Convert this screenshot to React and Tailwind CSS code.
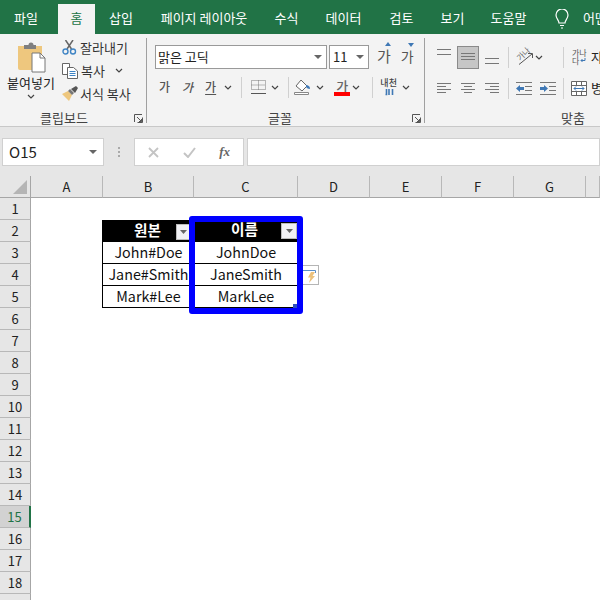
import React from "react";

const tabs = [
  { label: "파일", w: "w-[52px]" },
  { label: "홈", w: "w-[37px]", active: true },
  { label: "삽입", w: "w-[52px]" },
  { label: "페이지 레이아웃", w: "w-[114px]" },
  { label: "수식", w: "w-[51px]" },
  { label: "데이터", w: "w-[63px]" },
  { label: "검토", w: "w-[53px]" },
  { label: "보기", w: "w-[49px]" },
  { label: "도움말", w: "w-[63px]" },
];

const cols = ["A", "B", "C", "D", "E", "F", "G", ""];
const rows = Array.from({ length: 19 }, (_, i) => i + 1);

const Chevron = ({ className = "" }) => (
  <svg width="8" height="5" viewBox="0 0 8 5" className={"shrink-0 " + className}>
    <path d="M1 1l3 3 3-3" fill="none" stroke="#444" strokeWidth="1.2" />
  </svg>
);

const Caret = () => (
  <svg width="8" height="4" viewBox="0 0 8 4" className="shrink-0">
    <path d="M0 0h8L4 4z" fill="#666" />
  </svg>
);

const Launcher = () => (
  <svg width="9" height="9" viewBox="0 0 9 9" className="shrink-0 mb-[3px]">
    <path d="M.5 8V.5H8M8.500 3.500v5h-5M3 3l4.500 4.500M7.500 5v2.500H5" fill="none" stroke="#555" strokeWidth="1" />
  </svg>
);

const Divider = ({ h = "h-[20px]" }) => <div className={"w-px bg-[#d0d0d0] shrink-0 " + h} />;
const GroupLine = () => <div className="w-px bg-[#a0a0a0] shrink-0 mt-[4px] mb-[3px]" />;

const PasteIcon = () => (
  <svg width="29" height="32" viewBox="0 0 29 32">
    <path d="M1 5h24v24H3a2 2 0 0 1-2-2z" fill="#eec77e" />
    <path d="M7 4h4.500a2.500 2.500 0 0 1 5 0H19v4H7z" fill="#7f7f7f" />
    <path d="M15 12h8l5 5v14H15z" fill="#fff" stroke="#777" />
    <path d="M23 12v5h5" fill="none" stroke="#777" />
  </svg>
);

const CutIcon = () => (
  <svg width="15" height="15" viewBox="0 0 15 15">
    <path d="M3.500 0l6 9M11 0l-6 9" stroke="#666" strokeWidth="1.500" fill="none" />
    <circle cx="3.500" cy="11.500" r="2.500" fill="none" stroke="#3f84c4" strokeWidth="1.400" />
    <circle cx="11" cy="11.500" r="2.500" fill="none" stroke="#3f84c4" strokeWidth="1.400" />
  </svg>
);

const CopyIcon = () => (
  <svg width="16" height="16" viewBox="0 0 16 16">
    <path d="M.5.500h7v11h-7z" fill="#fff" stroke="#666" />
    <path d="M5.500 4.500h6l4 3.500v7.500h-10z" fill="#fff" stroke="#666" />
    <path d="M7.500 8.500h6M7.500 10.500h6M7.500 12.500h6" stroke="#3f84c4" />
  </svg>
);

const PainterIcon = () => (
  <svg width="16" height="15" viewBox="0 0 16 15">
    <path d="M0 8l6-3 4 4-3 6z" fill="#eec77e" />
    <path d="M6 5l2-2 4 4-2 2z" fill="#777" />
    <path d="M9 3l5-3 2 2-3 5z" fill="#555" />
  </svg>
);

const AlignLines = ({ lines }) => (
  <svg width="15" height="13" viewBox="0 0 15 13" className="shrink-0">
    {lines.map(([x1, x2, y]) => (
      <path key={y} d={`M${x1} ${y}.5H${x2}`} stroke="#777" />
    ))}
  </svg>
);

const Clipboard = () => (
  <section className="w-[146px] shrink-0 flex flex-col">
    <div className="flex h-[76px]">
      <div className="w-[62px] flex flex-col items-center pt-[7px]">
        <PasteIcon />
        <span className="text-[13px] leading-[20px]">붙여넣기</span>
        <Chevron className="mt-[1px]" />
      </div>
      <div className="flex flex-col pt-[2px] text-[13px] leading-[23px] text-[#333]">
        <div className="flex items-center h-[23px]">
          <CutIcon />
          <span className="ml-[3px]">잘라내기</span>
        </div>
        <div className="flex items-center h-[23px]">
          <CopyIcon />
          <span className="ml-[3px]">복사</span>
          <Chevron className="ml-[10px]" />
        </div>
        <div className="flex items-center h-[23px]">
          <PainterIcon />
          <span className="ml-[2px]">서식 복사</span>
        </div>
      </div>
    </div>
    <div className="flex-1 flex items-end pl-[40px] pr-[3px] justify-between text-[13px] text-[#444]">
      <span className="leading-[16px]">클립보드</span>
      <Launcher />
    </div>
  </section>
);

const FontSection = () => (
  <section className="w-[277px] shrink-0 flex flex-col pl-[8px] pr-[3px]">
    <div className="flex items-center h-[23px] mt-[11px]">
      <div className="w-[172px] h-[24px] bg-white border border-[#999] flex items-center justify-between pl-[2px] pr-[4px] text-[13px] text-[#222]">
        <span>맑은 고딕</span>
        <Caret />
      </div>
      <div className="w-[40px] h-[24px] ml-[2px] bg-white border border-[#999] flex items-center justify-between pl-[3px] pr-[4px] text-[13px] text-[#222]">
        <span>11</span>
        <Caret />
      </div>
      <span className="ml-[8px] text-[15px] text-[#555] relative">
        가
        <span className="absolute -top-[3px] right-0 w-0 h-0 border-x-[3px] border-b-[4px] border-x-transparent border-b-[#3f78b5]" />
      </span>
      <span className="ml-[10px] text-[14px] text-[#555] relative">
        가
        <span className="absolute -top-[3px] right-0 w-0 h-0 border-x-[3px] border-t-[4px] border-x-transparent border-t-[#3f78b5]" />
      </span>
    </div>
    <div className="flex items-center h-[24px] mt-[7px] text-[#555]">
      <span className="ml-[4px] text-[12px] font-medium">가</span>
      <span className="ml-[12px] text-[12px] italic font-medium">가</span>
      <span className="ml-[12px] text-[12px] font-medium underline underline-offset-2">가</span>
      <Chevron className="ml-[8px]" />
      <Divider h="h-[21px] ml-[9px]" />
      <svg width="16" height="15" viewBox="0 0 16 15" className="ml-[9px]">
        <path d="M.5.500h14v9h-14zM7.500.500v9M.5 5h14" fill="none" stroke="#777" strokeDasharray="1 1" />
        <path d="M0 13.500h15" stroke="#555" />
      </svg>
      <Chevron className="ml-[4px]" />
      <Divider h="h-[21px] ml-[9px]" />
      <svg width="17" height="16" viewBox="0 0 17 16" className="ml-[5px]">
        <path d="M7 1l6 6-5 5-6-5z" fill="#fff" stroke="#666" />
        <path d="M12 6c2 0 4 1 4 4-2 0-3-1-4-2z" fill="#3f78b5" />
        <path d="M.5 13.500h14v2H.5z" fill="#fff" stroke="#888" />
      </svg>
      <Chevron className="ml-[5px]" />
      <div className="ml-[10px] w-[16px] flex flex-col items-center">
        <span className="text-[13px] leading-[13px] font-medium text-[#666]">가</span>
        <div className="w-[16px] h-[4px] bg-[#ff0000]" />
      </div>
      <Chevron className="ml-[2px]" />
      <Divider h="h-[21px] ml-[12px]" />
      <div className="ml-[8px] w-[15px] flex flex-col items-center">
        <span className="text-[9px] leading-[10px] font-medium text-[#444] whitespace-nowrap">내천</span>
        <svg width="10" height="8" viewBox="0 0 10 8">
          <path d="M1.500 6.500h1V1M5 1v6M8.500 1v6" fill="none" stroke="#3f78b5" strokeWidth="1.600" />
        </svg>
      </div>
      <Chevron className="ml-[6px]" />
    </div>
    <div className="flex-1 flex items-end justify-between text-[13px] text-[#444]">
      <span className="ml-[113px] leading-[16px]">글꼴</span>
      <Launcher />
    </div>
  </section>
);

const Alignment = () => (
  <section className="flex-1 min-w-0 flex flex-col pl-[12px] overflow-hidden">
    <div className="flex items-center h-[24px] mt-[11px]">
      <div className="self-start mt-[3px]">
        <AlignLines lines={[[0, 14, 1], [0, 14, 6]]} />
      </div>
      <div className="w-[22px] h-[23px] ml-[5px] bg-[#c6c6c6] border border-[#8a8a8a] flex items-center justify-center shrink-0">
        <AlignLines lines={[[0, 14, 2], [0, 14, 5], [0, 14, 8]]} />
      </div>
      <div className="ml-[6px] mt-[8px]">
        <AlignLines lines={[[0, 14, 3], [0, 14, 8]]} />
      </div>
      <Divider h="h-[21px] ml-[8px]" />
      <div className="relative w-[17px] h-[17px] ml-[7px] shrink-0">
        <span className="absolute left-0 top-0 text-[8px] leading-[10px] text-[#666] -rotate-45 whitespace-nowrap">가나</span>
        <svg width="17" height="17" viewBox="0 0 17 17" className="absolute left-0 top-0">
          <path d="M3 15.500L16 5M12 4.500h4.500V9" stroke="#555" fill="none" />
        </svg>
      </div>
      <Chevron className="ml-[2px]" />
      <Divider h="h-[21px] ml-[20px]" />
      <div className="relative ml-[8px] w-[15px] h-[17px] text-[8px] leading-[8px] text-[#555] shrink-0">
        <span className="block whitespace-nowrap">가나</span>
        <span className="block">다</span>
        <svg width="6" height="5" viewBox="0 0 6 5" className="absolute right-[1px] bottom-[3px]">
          <path d="M5 0v2.500H1M2.500 1L1 2.500 2.500 4" fill="none" stroke="#3f78b5" />
        </svg>
      </div>
      <span className="ml-[4px] text-[13px] whitespace-nowrap">자동</span>
    </div>
    <div className="flex items-center h-[24px] mt-[7px]">
      <AlignLines lines={[[0, 14, 1], [0, 9, 4], [0, 14, 7], [0, 9, 10]]} />
      <div className="ml-[9px]">
        <AlignLines lines={[[0, 14, 1], [3, 11, 4], [0, 14, 7], [3, 11, 10]]} />
      </div>
      <div className="ml-[9px]">
        <AlignLines lines={[[0, 14, 1], [5, 14, 4], [0, 14, 7], [5, 14, 10]]} />
      </div>
      <Divider h="h-[21px] ml-[8px]" />
      <svg width="16" height="13" viewBox="0 0 16 13" className="ml-[7px] shrink-0">
        <path d="M0 .5h16M9 4.500h7M9 8.500h7M0 12.500h16" stroke="#777" />
        <path d="M0 6.500l4-3.500v2h4v3H4v2z" fill="#3f78b5" />
      </svg>
      <svg width="16" height="13" viewBox="0 0 16 13" className="ml-[8px] shrink-0">
        <path d="M0 .5h16M9 4.500h7M9 8.500h7M0 12.500h16" stroke="#777" />
        <path d="M8 6.500L4 3v2H0v3h4v2z" fill="#3f78b5" />
      </svg>
      <Divider h="h-[21px] ml-[7px]" />
      <svg width="16" height="15" viewBox="0 0 16 15" className="ml-[7px] shrink-0">
        <path d="M.5.500h15v14H.5zM.5 4.500h15M.5 10.500h15M5.500.500v4M10.500.500v4M5.500 10.500v4M10.500 10.500v4" fill="#fff" stroke="#666" />
        <path d="M3 7.500h10M5 5.500l-2 2 2 2M11 5.500l2 2-2 2" fill="none" stroke="#3f78b5" />
      </svg>
      <span className="ml-[4px] text-[13px] whitespace-nowrap">병합</span>
    </div>
    <div className="flex-1 flex items-end text-[13px] text-[#444]">
      <span className="ml-[124px] leading-[16px]">맞춤</span>
    </div>
  </section>
);

const cellBase = "flex items-center justify-center text-[14.3px] leading-none pb-[1px] text-[#111] border-black";

const FilterBtn = ({ className = "" }) => (
  <div className={"h-[16px] bg-[#f0f0f4] border border-[#bbb] flex items-center justify-center shrink-0 " + className}>
    <svg width="7" height="4" viewBox="0 0 7 4">
      <path d="M0 0h7L3.500 4z" fill="#666" />
    </svg>
  </div>
);

const Sheet = () => (
  <div className="relative grid grid-cols-[31px_72px_91px_104px_72px_72px_72px_72px_1fr] grid-rows-[22px] auto-rows-[22px] bg-white">
    <div className="bg-[#e6e6e6] border-b border-r border-[#a6a6a6] flex items-end justify-end pr-[3px] pb-[3px]">
      <div className="w-0 h-0 border-l-[14px] border-b-[14px] border-l-transparent border-b-[#b5b5b5]" />
    </div>
    {cols.map((c, i) => (
      <div
        key={i}
        className="bg-[#e6e6e6] border-b border-r border-b-[#a6a6a6] border-r-[#b8b8b8] flex items-center justify-center text-[13px] text-[#222]"
      >
        {c}
      </div>
    ))}
    {rows.map((r) => (
      <React.Fragment key={r}>
        <div
          className={
            r === 15
              ? "bg-[#d2d2d2] border-b border-b-[#b8b8b8] border-r-2 border-r-[#217346] flex items-center justify-center text-[13px] text-[#217346]"
              : "bg-[#e6e6e6] border-b border-b-[#b8b8b8] border-r border-r-[#a6a6a6] flex items-center justify-center text-[13px] text-[#222]"
          }
        >
          {r}
        </div>
        <div />
        {r === 2 && (
          <>
            <div className="bg-black border-t border-black flex items-center text-white font-bold text-[14.67px] pl-[31px] pr-[3px] justify-between border-l -ml-px">
              <span className="mb-[4px]">원본</span>
              <FilterBtn className="w-[15px]" />
            </div>
            <div className="bg-black flex items-center text-white font-bold text-[14.67px] pl-[37px] pr-[1px] justify-between">
              <span className="mb-[4px]">이름</span>
              <FilterBtn className="w-[16px]" />
            </div>
          </>
        )}
        {r === 3 && (
          <>
            <div className={cellBase + " border-b border-l -ml-px"}>John#Doe</div>
            <div className={cellBase + " border-b"}>JohnDoe</div>
          </>
        )}
        {r === 4 && (
          <>
            <div className={cellBase + " border-b border-l -ml-px"}>Jane#Smith</div>
            <div className={cellBase + " border-b"}>JaneSmith</div>
          </>
        )}
        {r === 5 && (
          <>
            <div className={cellBase + " border-b border-l -ml-px"}>Mark#Lee</div>
            <div className={cellBase + " border-b"}>MarkLee</div>
          </>
        )}
        {(r < 2 || r > 5) && (
          <>
            <div />
            <div />
          </>
        )}
        <div />
        <div />
        <div />
        <div />
        <div />
      </React.Fragment>
    ))}
    {/* selection box over column C */}
    <div className="absolute left-[189px] top-[40px] w-[114px] h-[98px] border-[6px] border-[#0000ff] rounded-[3px] pointer-events-none">
      <div className="absolute right-0 bottom-0 w-[4px] h-[4px] bg-[#3050c0]" />
    </div>
    {/* flash fill tag */}
    <div className="absolute left-[303px] top-[89px] w-[16px] h-[20px] bg-white border border-[#b5b5b5] border-l-0">
      <svg width="15" height="18" viewBox="0 0 15 18">
        <path d="M0 4.500h12.500V7" fill="none" stroke="#5b8fc9" />
        <path d="M8 6h4l-2.500 4H12l-6 7 1.500-5.500H5z" fill="#ecc17c" />
      </svg>
    </div>
  </div>
);

const App = () => {
  return (
    <div
      className="w-[600px] h-[600px] overflow-hidden bg-white text-[#222]"
      style={{ fontFamily: '"Noto Sans CJK KR", "Liberation Sans", sans-serif' }}
    >
      {/* tabs */}
      <div className="h-[34px] bg-[#217346] flex items-end overflow-hidden text-[13px] text-white">
        {tabs.map((t) => (
          <div
            key={t.label}
            className={
              "h-[30px] shrink-0 flex items-center justify-center whitespace-nowrap pb-[3px] " +
              t.w +
              (t.active ? " bg-[#f3f3f3] text-[#217346] ml-[6px]" : "")
            }
          >
            {t.label}
          </div>
        ))}
        <svg width="14" height="20" viewBox="0 0 14 20" className="ml-[15px] mb-[5px] shrink-0">
          <path d="M4 14c0-3-3-4-3-8a6 6 0 0 1 12 0c0 4-3 5-3 8zM5 16.500h4M6 19h2" fill="none" stroke="#fff" strokeWidth="1.200" />
        </svg>
        <span className="ml-[14px] shrink-0 h-[30px] flex items-center pb-[3px]">어떤</span>
      </div>

      {/* ribbon */}
      <div className="h-[93px] bg-[#f3f3f3] flex border-b border-[#c8c8c8]">
        <Clipboard />
        <GroupLine />
        <FontSection />
        <GroupLine />
        <Alignment />
      </div>

      {/* formula bar */}
      <div className="h-[49px] bg-[#e6e6e6] flex items-start pt-[11px] pb-[10px]">
        <div className="ml-[2px] w-[102px] h-[28px] bg-white border border-[#d0d0d0] flex items-center justify-between pl-[6px] pr-[6px] text-[15px]">
          <span>O15</span>
          <Caret />
        </div>
        <div className="w-[30px] h-[28px] flex flex-col items-center justify-center gap-[2px]">
          <div className="w-[2px] h-[2px] bg-[#aaa]" />
          <div className="w-[2px] h-[2px] bg-[#aaa]" />
          <div className="w-[2px] h-[2px] bg-[#aaa]" />
        </div>
        <div className="w-[110px] h-[28px] bg-white border border-[#d0d0d0] flex items-center justify-between px-[13px]">
          <svg width="11" height="11" viewBox="0 0 11 11">
            <path d="M1 1l9 9M10 1l-9 9" stroke="#c4c4c4" strokeWidth="1.800" />
          </svg>
          <svg width="13" height="11" viewBox="0 0 13 11">
            <path d="M1 6l4 4 7-9" fill="none" stroke="#c4c4c4" strokeWidth="2" />
          </svg>
          <span className="text-[13px] italic font-bold text-[#666]" style={{ fontFamily: '"Liberation Serif", serif' }}>
            fx
          </span>
        </div>
        <div className="ml-[3px] flex-1 h-[28px] bg-white border border-[#d0d0d0]" />
      </div>

      <Sheet />
    </div>
  );
};

export default App;
